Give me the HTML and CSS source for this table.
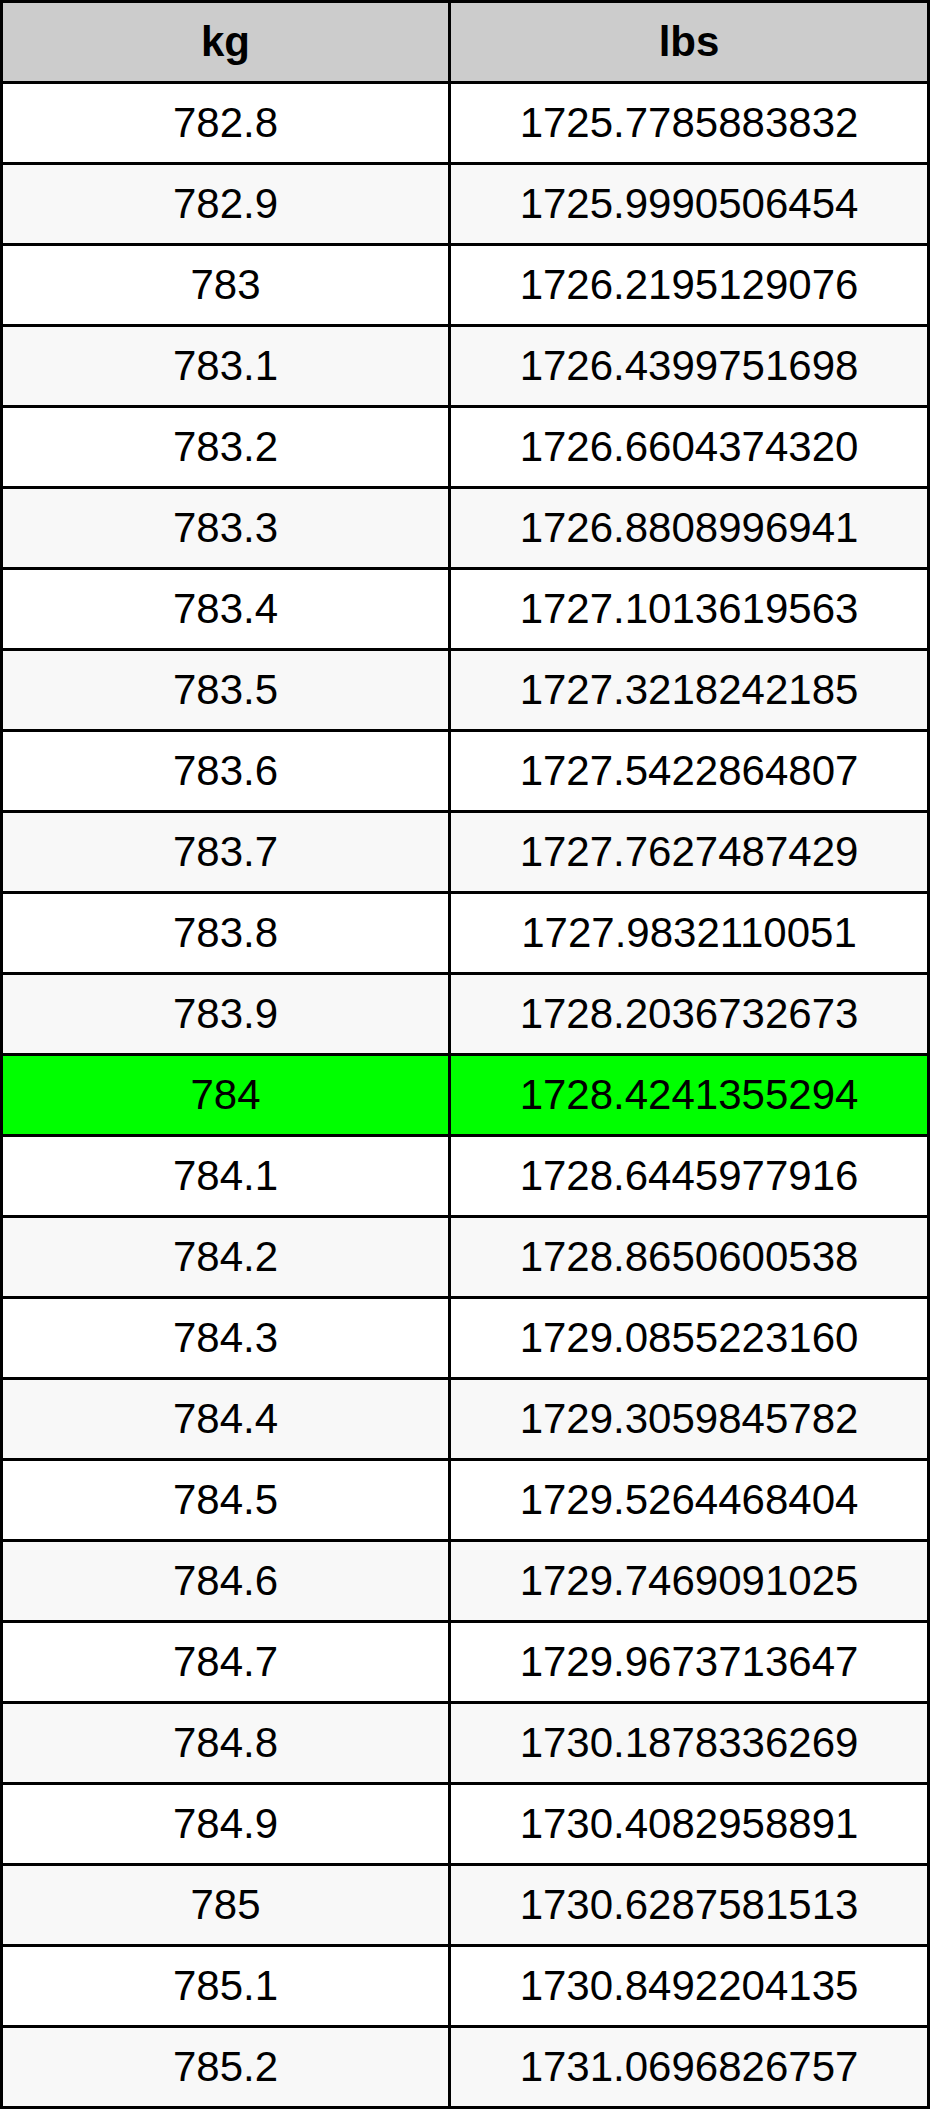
FILE: index.html
```html
<!DOCTYPE html>
<html lang="en">
<head>
<meta charset="utf-8">
<title>kg to lbs</title>
<link rel="stylesheet" href="styles.css">
</head>
<body>
<div class="table">
  <div class="cell head">kg</div><div class="cell head">lbs</div>
  <div class="cell">782.8</div><div class="cell">1725.7785883832</div>
  <div class="cell alt">782.9</div><div class="cell alt">1725.9990506454</div>
  <div class="cell">783</div><div class="cell">1726.2195129076</div>
  <div class="cell alt">783.1</div><div class="cell alt">1726.4399751698</div>
  <div class="cell">783.2</div><div class="cell">1726.6604374320</div>
  <div class="cell alt">783.3</div><div class="cell alt">1726.8808996941</div>
  <div class="cell">783.4</div><div class="cell">1727.1013619563</div>
  <div class="cell alt">783.5</div><div class="cell alt">1727.3218242185</div>
  <div class="cell">783.6</div><div class="cell">1727.5422864807</div>
  <div class="cell alt">783.7</div><div class="cell alt">1727.7627487429</div>
  <div class="cell">783.8</div><div class="cell">1727.9832110051</div>
  <div class="cell alt">783.9</div><div class="cell alt">1728.2036732673</div>
  <div class="cell hl">784</div><div class="cell hl">1728.4241355294</div>
  <div class="cell">784.1</div><div class="cell">1728.6445977916</div>
  <div class="cell alt">784.2</div><div class="cell alt">1728.8650600538</div>
  <div class="cell">784.3</div><div class="cell">1729.0855223160</div>
  <div class="cell alt">784.4</div><div class="cell alt">1729.3059845782</div>
  <div class="cell">784.5</div><div class="cell">1729.5264468404</div>
  <div class="cell alt">784.6</div><div class="cell alt">1729.7469091025</div>
  <div class="cell">784.7</div><div class="cell">1729.9673713647</div>
  <div class="cell alt">784.8</div><div class="cell alt">1730.1878336269</div>
  <div class="cell">784.9</div><div class="cell">1730.4082958891</div>
  <div class="cell alt">785</div><div class="cell alt">1730.6287581513</div>
  <div class="cell">785.1</div><div class="cell">1730.8492204135</div>
  <div class="cell alt">785.2</div><div class="cell alt">1731.0696826757</div>
</div>
</body>
</html>
```
FILE: styles.css
```css
html, body {
  margin: 0;
  padding: 0;
  background: #fff;
}
.table {
  display: grid;
  grid-template-columns: 445px 476px;
  grid-auto-rows: 78px;
  gap: 3px;
  padding: 3px;
  background: #000;
  width: max-content;
  font-family: "Liberation Sans", Arial, sans-serif;
  font-size: 42px;
  color: #000;
}
.cell {
  background: #fff;
  display: flex;
  align-items: center;
  justify-content: center;
  line-height: normal;
}
.head {
  background: #ccc;
  font-weight: bold;
}
.alt {
  background: #f8f8f8;
}
.hl {
  background: #00ff00;
}
```
